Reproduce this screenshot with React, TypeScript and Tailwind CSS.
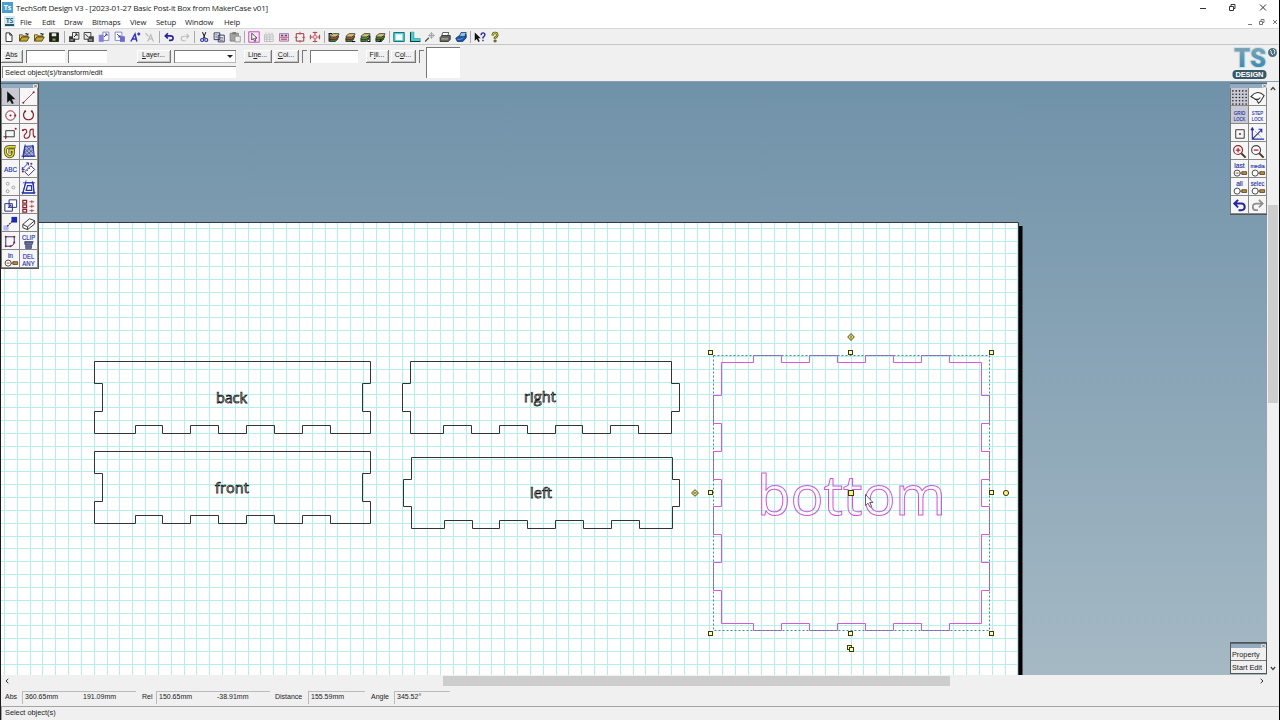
import type React from "react"

const MENUS = [
  { label: "File", width: "w-[22px]" },
  { label: "Edit", width: "w-[22px]" },
  { label: "Draw", width: "w-[28px]" },
  { label: "Bitmaps", width: "w-[38px]" },
  { label: "View", width: "w-[26px]" },
  { label: "Setup", width: "w-[29px]" },
  { label: "Window", width: "w-[39px]" },
  { label: "Help", width: "w-[24px]" },
]

const NAVY = "#29297d"
const BLUE = "#2330a8"
const MAROON = "#8a2430"

const openFolder = (
  <>
    <path d="M2 5h4l1 1.500h6V8H5l-3 5z" fill="#e8cf5a" stroke="#3c3410" strokeWidth="1" />
    <path d="M2 13.500 5 8h10l-3 5.500z" fill="#c9a52c" stroke="#3c3410" strokeWidth="1" />
    <path d="M9 4q2-2.500 4-.5l1-1v3h-3l1-1" fill="#333" />
  </>
)

const pageArrow = (a: string, b: string) => (
  <>
    <path d={a} fill="#eee" stroke="#333" strokeWidth="1.200" />
    <path d={b} fill="none" stroke="#222" strokeWidth="1.300" />
  </>
)

const layers = (top: string, arrow: string) => (
  <>
    <path d="M2.500 14V11L6 8.500h7V11l-3.500 3z" fill="#3f7a35" stroke="#222" strokeWidth="1" />
    <path d="M2.500 11V9L6 6.500h8V8.500L10 11z" fill={top} stroke="#222" strokeWidth="1" />
    <path d="M3 8V6.500L7 3.500h7.500V5L10.500 8z" fill="#cfc56e" stroke="#222" strokeWidth="1" />
    <path d={arrow} stroke="#111" strokeWidth="1.500" fill="none" />
  </>
)

// Every glyph of the main toolbar, grouped as the separators split them.
const TOOLBAR: React.ReactNode[][] = [
  [
    <path d="M4 2.500h5l3 3v8.500H4zM9 2.500v3h3" fill="#fff" stroke="#222" strokeWidth="1.200" />,
    openFolder,
    openFolder,
    <>
      <path d="M2 2.500h12v11.500H2z" fill="#1c2413" stroke="#111" />
      <path d="M5 3h6v4H5z" fill="#e9ecdf" />
      <path d="M6 10h4v3H6z" fill="#8d9466" />
    </>,
  ],
  [
    <>
      {pageArrow("M6 2h8.500v9H6z", "M8 8l4-4M9.500 4H12v2.500")}
      <path d="M1.500 7h5v3h3v4.500h-8z" fill="#333" />
      <path d="M3 12h4" stroke="#fff" />
    </>,
    <>
      {pageArrow("M1.500 2h9v9h-9z", "M3 4l5 5")}
      <path d="M8 7h6.500v7.500H6V10h2z" fill="#444" />
      <path d="M8 12h4" stroke="#fff" />
    </>,
    <>
      <path d="M6.500 1.500h8v11h-8z" fill="#fff" stroke="#6a65b8" />
      <path d="M1 5h6.500v9.500H1z" fill="#8580dc" />
      <path d="M8 8l4-4M9.500 4H12v2.500" stroke="#332f90" fill="none" strokeWidth="1.200" />
    </>,
    <>
      <path d="M1.500 1.500h9v11h-9z" fill="#fff" stroke="#6a65b8" />
      <path d="M8 7h6.500v7.500H8z" fill="#6f6ad0" />
      <path d="M4 4l4 4M8 5.500V8H5.500" stroke="#332f90" fill="none" strokeWidth="1.200" />
    </>,
    <path d="M2.500 14 8 4l2.500 10M5 10.500h5M11 4h4M13 2v4" stroke="#3436b5" strokeWidth="2" fill="none" />,
    <path d="M5 14 9 5l3.500 9M6 10.500h5M2 3l4 4" stroke="#b9b9bd" strokeWidth="1.500" fill="none" />,
  ],
  [
    <path d="M3 6.500h7q3.500 0 3.500 3t-3.500 3H8M6.500 3 3 6.500 6.500 10" stroke="#23269a" strokeWidth="2.100" fill="none" />,
    <path d="M13 7H7q-4 0-4 3t4 3h2M10 4l3 3-3 3" stroke="#bfbfc2" strokeWidth="1.600" fill="none" />,
  ],
  [
    <>
      <path d="M6 1.500l3.500 8.500M10.500 1.500 7 10" stroke="#222" strokeWidth="1.400" />
      <circle cx="5.500" cy="12" r="2" stroke={BLUE} strokeWidth="1.500" fill="none" />
      <circle cx="11" cy="12" r="2" stroke={BLUE} strokeWidth="1.500" fill="none" />
    </>,
    <>
      <path d="M1.500 2.500h7.500v9H1.500zM7 5.500h8v9H7z" fill="#fff" stroke="#26275c" strokeWidth="1.200" />
      <path d="M3 5h3M3 7h3M3 9h3M8.500 8.500h5M8.500 10.500h5M8.500 12.500h5" stroke="#555" />
    </>,
    <>
      <path d="M1.500 3h11v10.500h-11z" fill="#a4a4a0" stroke="#777" />
      <path d="M4.500 1.500h5v3h-5z" fill="#777" />
      <path d="M8 7h7v7.500H8z" fill="#eee" stroke="#888" />
    </>,
  ],
  [
    <>
      <path d="M1 1h14v14H1z" fill="#f6e3f6" stroke="#c83fb4" strokeWidth="1.200" />
      <path d="M5 3v9l2-2 2 4 1.500-1-1.500-3.500h3z" fill="#fff" stroke="#222" />
    </>,
    <path d="M2 5h11.500v9H2zM2 8h11M2 11h11M5 5v9M9 5v9M4 2v2M8 2v2M12 2v2" stroke="#bdbdc1" fill="none" strokeWidth="1.200" />,
    <>
      <path d="M2 3.500h12v10H2z" fill="#e5d2de" stroke="#a15a86" />
      <path d="M3 8.300h10" stroke="#b13448" />
      <path d="M4 5h3v2H4zM9 5h3v2H9z" fill="#464cc0" />
      <path d="M4 10h8v2H4z" fill="#b86c80" />
    </>,
    <>
      <path d="M3 3.500h10v10H3z" stroke="#9c3548" fill="none" strokeWidth="1.300" />
      <path d="M8 1v4M8 12v3.500M1 8.500h4M11 8.500h4" stroke="#b9525f" strokeWidth="1.200" />
    </>,
    <>
      <path d="M8 1v14M1 8h14" stroke="#b2485a" strokeWidth="1.600" />
      <path d="M5 2h6M5 14h6M2 5v6M14 5v6" stroke="#b2485a" strokeWidth="1.500" />
      <path d="M6 6h4v4H6z" fill="#f3d5da" stroke="#c77" />
    </>,
  ],
  [
    layers("#c0573a", "M1.500 14V3.500h4"),
    layers("#c8593c", "M10 14h5"),
    layers("#6d9a3c", "M14.500 6v8H11"),
    layers("#55823a", "M6 14h3v-3"),
  ],
  [
    <>
      <path d="M1 2h14v12H1z" fill="#4fd6da" />
      <path d="M3.500 4.500h9v7.500h-9z" fill="#fff" />
      <path d="M1 2h14v12H1z" stroke="#12636e" fill="none" strokeWidth="1.200" />
    </>,
    <>
      <path d="M2 1.500V14h13v-4H6.500V1.500z" fill="#45cdd0" stroke="#208088" strokeWidth=".7" />
      <path d="M2 1.500V14h13" stroke="#123c44" fill="none" strokeWidth="1.400" />
    </>,
    <>
      <path d="M1.500 14l5-5" stroke="#444" strokeWidth="1.500" />
      <circle cx="10" cy="6" r="2.800" stroke="#999" fill="none" />
      <path d="M10 1.500v9M5.500 6h9" stroke="#999" />
    </>,
    <>
      <path d="M5 2h8l-1.500 5H3.500z" fill="#fff" stroke="#333" />
      <path d="M1.500 8.500 4 6h11v5l-2.500 3h-11z" fill="#68685c" stroke="#222" />
      <path d="M3 10.500h9" stroke="#ddd" />
    </>,
    <>
      <path d="M1 9.500 6 6l9-1.500V9l-4.500 5H3z" fill="#1a55a8" stroke="#12305e" />
      <path d="M6 6.500 8 2h7l-2 5.500H7z" fill="#8cc0e8" stroke="#12305e" />
      <path d="M3 11q4 1.500 8-2" stroke="#7bd" fill="none" />
    </>,
  ],
  [
    <>
      <path d="M1 2v11l2.700-2.500L6 14.500 7.700 13.500 5.500 9.500H9z" fill="#111" />
      <path d="M9.500 5.500Q9.500 2.500 12 2.500T14.500 5q0 1.500-2.500 3.500v1.500M12 11.500v2" stroke="#2a2d9a" strokeWidth="1.900" fill="none" />
    </>,
    <>
      <path d="M5 6q0-3.500 3-3.500t3 3q0 1.500-3 3.500v1.500" stroke="#2d2d10" strokeWidth="3.200" fill="none" />
      <path d="M5 6q0-3.500 3-3.500t3 3q0 1.500-3 3.500v1.500" stroke="#cfcf2c" strokeWidth="1.500" fill="none" />
      <path d="M6.700 12h2.800v2.500H6.700z" fill="#a9a91f" stroke="#2d2d10" strokeWidth=".8" />
    </>,
  ],
]

type WordProps = {
  text: string
  y: number
  length: number
  size?: number
}

function Word({ text, y, length, size = 7 }: WordProps) {
  return (
    <text
      x={9 - length / 2}
      y={y}
      textLength={length}
      lengthAdjust="spacingAndGlyphs"
      fontSize={size}
      fill={BLUE}
      stroke={BLUE}
      strokeWidth=".15"
      fontFamily="Liberation Sans, sans-serif"
    >
      {text}
    </text>
  )
}

const dot = (x: number, y: number) => <circle key={`${x}-${y}`} cx={x} cy={y} r="1.100" fill={MAROON} />

const magnifierHandle = (
  <>
    <circle cx="6.500" cy="12.800" r="3.200" fill="#fff" stroke="#444" />
    <path d="M9.500 12.800h2" stroke="#444" />
    <path d="M11.500 11.300h5v3h-5z" fill="#b8893c" stroke="#4b3a1e" strokeWidth=".8" />
  </>
)

const LEFT_TOOLS: React.ReactNode[] = [
  <path d="M5.500 2.500v12l2.900-2.700 2.100 4.200 1.900-1-2.100-4.100h3.900z" fill="#111" />,
  <>
    <path d="M3.500 14.500 14.500 3.500" stroke="#a04a55" />
    {dot(3.5, 14.5)}
    {dot(14.5, 3.5)}
  </>,
  <>
    <circle cx="9" cy="9" r="5" stroke={MAROON} fill="none" />
    {dot(9, 9)}
    {dot(14, 9)}
  </>,
  <>
    <path d="M5.500 4.500C2 8 4 13.500 9 13.500S16 8 12.500 4.500" stroke={MAROON} fill="none" strokeWidth="1.200" />
    {dot(5.5, 4.5)}
    {dot(12.5, 4.5)}
  </>,
  <>
    <path d="M4 6h9v6.500H4zM1.500 12.500H4M4 12.500V15" stroke="#333" fill="none" />
    {dot(4, 12.5)}
    {dot(14.5, 4)}
  </>,
  <>
    <path d="M3 5.500Q7 3 7.200 7.500L4.500 11Q4 14 7 14t3.500-4V6.500Q11 4 14 4.500v5q0 3 2 3" stroke={MAROON} fill="none" strokeWidth="1.200" />
    {dot(3, 5.5)}
    {dot(15.5, 12.5)}
  </>,
  <>
    <path d="M14.500 4H7.500Q3.500 4 3.500 8.500T7.500 14.500q4.500 0 4.500-5V7.500H8.500V11" stroke="#373710" strokeWidth="3.200" fill="none" />
    <path d="M14.500 4H7.500Q3.500 4 3.500 8.500T7.500 14.500q4.500 0 4.500-5V7.500H8.500V11" stroke="#dcd33a" strokeWidth="1.800" fill="none" />
  </>,
  <>
    <path d="M5 3.500 14 3l1 11H3z" fill="#a5aed0" stroke={BLUE} />
    <path d="M5 6l8 8M7 4l7 7M4 9l5 5M4 11l8-7M5 14l9-7" stroke="#46508c" strokeWidth=".8" />
    <path d="M1.500 14h15M5.500 1.500l-2 15M13.500 2v4" stroke={BLUE} />
  </>,
  <Word text="ABC" y={12} length={14} size={8} />,
  <>
    <path d="M5 11.500l6.500-6.500 4 4L9 15.500z" fill="#fff" stroke={NAVY} />
    <path d="M2 9l7-7M7.500 9.500l1 1M9.500 7.500l1 1M2.500 6.500v2.500H5M9 4.500V2H6.500" stroke={BLUE} fill="none" />
    {dot(3, 11)}
    {dot(12, 3)}
  </>,
  <g stroke="#9a9a9a" fill="#fff">
    <circle cx="6" cy="5" r="1.500" />
    <circle cx="12" cy="9" r="1.500" />
    <circle cx="6" cy="13" r="1.500" />
  </g>,
  <>
    <path d="M6 4h8l1 11H3z M8 7h4l.5 5h-6z" fill="none" stroke={BLUE} strokeWidth="1.200" />
    <path d="M1.500 14.500h15M6.500 1.500l-4 15M13 2l2 14M3 4h13" stroke={BLUE} strokeWidth=".8" />
  </>,
  <>
    <path d="M7.500 3h8v8h-8z" fill="#fff" stroke={NAVY} />
    <path d="M3 7h8v8H3z" fill="none" stroke={NAVY} />
    <path d="M6.500 11.500l3-3M7.500 8.500h2v2" stroke={BLUE} fill="none" />
  </>,
  <>
    <path d="M3 3.500h4v3H3zM3 8.300h4v3H3zM3 13h4v3H3z" stroke={MAROON} fill="none" strokeWidth="1.300" />
    <path d="M10 5h5M10 9.800h5M10 14.500h5M12.500 3.300v3.400M12.500 8.100v3.400M12.500 12.800v3.400" stroke="#b33a44" strokeWidth=".9" />
  </>,
  <>
    <path d="M10 2h6v6h-6z" fill="#1c2ab8" />
    <path d="M1.500 11h5.500v5.500H1.500z" fill="#b4b9f0" />
    <path d="M5.500 12 11 6.500" stroke="#333" strokeWidth="1.300" strokeDasharray="2 1" />
  </>,
  <path d="M3 10 10 4l5.500 2v3.500L8 15.500l-5-2zM3 10l5 2.500L15.500 6M8 12.500v3" fill="#fff" stroke="#333" />,
  <>
    <path d="M4 4h9v6q-1 4-4 4H4z" fill="none" stroke={NAVY} />
    {[dot(4, 4), dot(13, 4), dot(13, 10), dot(9, 14), dot(4, 14)]}
  </>,
  <>
    <Word text="CLIP" y={7.5} length={14} />
    <path d="M5 9h9l-1 3h-.5l-.5 4.500H6V12H5z" fill="#4d5378" stroke="#222c70" strokeWidth=".6" />
    <path d="M6 11h7M6.500 13h6M6.500 15h5" stroke="#9aa0c0" strokeWidth=".6" />
  </>,
  <>
    <Word text="in" y={7.5} length={5.5} />
    {magnifierHandle}
    <path d="M5 12.800h3" stroke="#b33" />
  </>,
  <>
    <Word text="DEL" y={8} length={12} />
    <Word text="ANY" y={15.5} length={13} />
  </>,
]

const RIGHT_TOOLS: React.ReactNode[] = [
  <g fill="#222">
    {[2, 5.5, 9, 12.5, 16].map((x) =>
      [2, 5.5, 9, 12.5, 16].map((y) => <circle key={`${x}-${y}`} cx={x} cy={y} r=".85" />),
    )}
  </g>,
  <path d="M2 8Q9 0 16 7l-4 6.500-2 1.500L8 11.500zM6 11h4l2-2" fill="#fff" stroke="#333" strokeWidth="1.100" />,
  <>
    <Word text="GRID" y={8} length={12} size={6} />
    <Word text="LOCK" y={15} length={12} size={6} />
  </>,
  <>
    <Word text="STEP" y={8} length={12} size={6} />
    <Word text="LOCK" y={15} length={12} size={6} />
  </>,
  <>
    <path d="M5 5h9v9H5z" stroke="#333" fill="none" />
    {dot(9.5, 9.5)}
  </>,
  <>
    <path d="M3.500 3v12H16M3.500 15 13.500 5M2 5.500 3.500 3 5 5.500M10 4.500h3.500V8" stroke={BLUE} fill="none" strokeWidth="1.200" />
    <path d="M7 7l6 6" stroke="#555" strokeDasharray="1 1" />
  </>,
  <>
    <circle cx="7.500" cy="7.500" r="4.700" stroke={MAROON} fill="#fff" strokeWidth="1.200" />
    <path d="M5 7.500h5M7.500 5v5" stroke="#c02030" strokeWidth="1.400" />
    <path d="M11 11 15.500 15.500" stroke="#4b3a1e" strokeWidth="2.200" />
  </>,
  <>
    <circle cx="7.500" cy="7.500" r="4.700" stroke="#444" fill="#fff" strokeWidth="1.200" />
    <path d="M5 7.500h5" stroke="#c02030" strokeWidth="1.400" />
    <path d="M11 11 15.500 15.500" stroke="#4b3a1e" strokeWidth="2.200" />
  </>,
  <>
    <Word text="last" y={7.5} length={11} />
    {magnifierHandle}
    <path d="M5 12.800h3" stroke="#b33" />
  </>,
  <>
    <Word text="media" y={7.5} length={15} size={6.5} />
    {magnifierHandle}
  </>,
  <>
    <Word text="all" y={7.5} length={7} />
    {magnifierHandle}
  </>,
  <>
    <Word text="selec" y={7.5} length={14.5} />
    {magnifierHandle}
  </>,
  <path d="M3.500 7H11q3.500 0 3.500 3.500T11 14H8M7.500 3 3.500 7l4 4" stroke="#2226a0" strokeWidth="2.100" fill="none" />,
  <path d="M14.500 7H8q-4 0-4 3.500T7.500 14h2M10.500 3l4 4-4 4" stroke="#8e8e8e" strokeWidth="1.800" fill="none" />,
]

const BOX_BACK =
  "M94.500 361.500H370.500V383.500H362.500V411.500H370.500V433.500H330.500V425.500H302.500V433.500H274.500V425.500H246.500V433.500H218.500V425.500H190.500V433.500H162.500V425.500H135.500V433.500H94.500V411.500H102.500V383.500H94.500Z"
const BOX_RIGHT =
  "M410.500 361.500H671.500V383.500H679.500V411.500H671.500V433.500H638.500V425.500H610.500V433.500H582.500V425.500H555.500V433.500H527.500V425.500H499.500V433.500H471.500V425.500H443.500V433.500H410.500V411.500H402.500V383.500H410.500Z"
const BOX_LEFT =
  "M411.500 457.500H672.500V479.500H679.500V506.500H672.500V528.500H639.500V520.500H611.500V528.500H583.500V520.500H555.500V528.500H527.500V520.500H499.500V528.500H472.500V520.500H444.500V528.500H411.500V506.500H403.500V479.500H411.500Z"
const BOX_BOTTOM =
  "M721.500 362.500H753.500V355.500H781.500V362.500H809.500V355.500H837.500V362.500H865.500V355.500H893.500V362.500H921.500V355.500H949.500V362.500H981.500V395.500H989.500V423.500H981.500V451.500H989.500V479.500H981.500V506.500H989.500V534.500H981.500V562.500H989.500V590.500H981.500V623.500H949.500V630.500H921.500V623.500H893.500V630.500H865.500V623.500H837.500V630.500H809.500V623.500H781.500V630.500H753.500V623.500H721.500V590.500H713.500V562.500H721.500V534.500H713.500V506.500H721.500V479.500H713.500V451.500H721.500V423.500H713.500V395.500H721.500Z"

const PART_LABELS = [
  { text: "back", x: 216, y: 403, length: 31 },
  { text: "front", x: 215, y: 493, length: 34 },
  { text: "right", x: 524, y: 402, length: 32 },
  { text: "left", x: 530, y: 498, length: 22 },
]

const HANDLES = [
  [711, 352],
  [851, 352],
  [992, 352],
  [711, 492],
  [992, 492],
  [711, 633],
  [851, 633],
  [992, 633],
  [850, 647],
  [852, 649],
]

const GRID_STEP = 12.828

// Grid lines are snapped to whole pixels.
function gridPath(): string {
  const parts: string[] = []
  for (let x = 4.43; x < 1018; x += GRID_STEP) parts.push(`M${Math.floor(x) + 0.5} 223V675`)
  for (let y = 228.2; y < 675; y += GRID_STEP) parts.push(`M1 ${Math.floor(y) + 0.5}H1018`)
  return parts.join("")
}

export default function App() {
  return (
    <div className="flex h-[720px] w-[1280px] flex-col overflow-hidden border-l border-r border-l-[#1a1a1a] border-r-black bg-[#f0f0f0] font-['Liberation_Sans',sans-serif] text-[7px] text-[#222]">
      <TitleBar />
      <MenuBar />
      <Toolbar />
      <PropertyBar />
      <div className="flex h-[593px] shrink-0">
        <Workspace />
        <VerticalScrollbar />
      </div>
      <HorizontalScrollbar />
      <CoordinateBar />
      <div className="flex h-[14px] items-center border-t border-l border-[#a5a5a5] pb-px pl-[3px] text-[7.350px]">
        Select object(s)
      </div>
    </div>
  )
}

function TitleBar() {
  return (
    <div className="flex h-[15px] shrink-0 items-center bg-white pl-px font-['Open_Sans',sans-serif]">
      <AppIcon />
      <span className="ml-[3px] pt-px text-[8px] tracking-[-0.22px] whitespace-nowrap">
        TechSoft Design V3 - [2023-01-27 Basic Post-it Box from MakerCase v01]
      </span>
      <svg className="mr-[10px] ml-auto h-[14px] w-[70px]" viewBox="0 0 70 14" fill="none" stroke="#333">
        <path d="M1 7.500h6M30.500 5.500h4v4h-4zM32 5.500v-2h4v4h-2M61 3.500l6 6M67 3.500l-6 6" />
      </svg>
    </div>
  )
}

function AppIcon() {
  return (
    <svg className="h-[11px] w-[11px]" viewBox="0 0 11 11">
      <rect width="11" height="11" fill="#4d9fcb" />
      <text x="5.500" y="8" textAnchor="middle" fontSize="7" fontWeight="700" fill="#fff">
        Ts
      </text>
    </svg>
  )
}

function MenuBar() {
  return (
    <div className="flex h-[13px] shrink-0 items-center bg-white pl-[3px] font-['Open_Sans',sans-serif] text-[7.700px] tracking-[-0.12px]">
      <svg className="mr-[5px] h-[11px] w-[11px]" viewBox="0 0 11 11">
        <rect width="11" height="11" fill="#d7e8ef" />
        <text x="5.500" y="6.500" textAnchor="middle" fontSize="7" fontWeight="700" fill="#26708e">
          TS
        </text>
        <path d="M1 8h9v2H1z" fill="#2d5767" />
      </svg>
      {MENUS.map((menu) => (
        <span key={menu.label} className={`${menu.width} pt-[2px]`}>
          {menu.label}
        </span>
      ))}
      <svg className="mr-[1px] ml-auto h-3 w-[34px]" viewBox="0 0 34 12" fill="none" stroke="#777">
        <path d="M4 8.500h4M15.500 5.500h3v3h-3zM17 5.500v-2h3v3h-2M29 4l4 4M33 4l-4 4" />
      </svg>
    </div>
  )
}

function Toolbar() {
  return (
    <div className="flex h-[17px] shrink-0 items-center border-t border-b border-t-[#d8d8d8] border-b-[#c6c6c6]">
      {TOOLBAR.map((group, i) => (
        <div key={i} className="flex items-center">
          {i > 0 && <div className="mx-[1.500px] h-3 w-px bg-[#aaa]" />}
          {group.map((glyph, j) => (
            <svg key={j} className="mx-[1.650px] h-3 w-3" viewBox="0 0 16 16" fill="none">
              {glyph}
            </svg>
          ))}
        </div>
      ))}
    </div>
  )
}

function PropertyBar() {
  return (
    <div className="flex h-[37px] shrink-0 border-b border-[#8aa0ae]">
      <div className="flex w-[235px] shrink-0 flex-col">
        <div className="flex h-[21px] items-center pt-px">
          <BarButton width="w-[22px]" accel="A" rest="bs" />
          <Field width="w-[39px]" className="ml-[3px]" />
          <Field width="w-[39px]" className="ml-[3px]" />
          <BarButton width="w-[34px]" accel="L" rest="ayer..." className="ml-[30px]" />
          <div className="ml-[3px] flex h-[13px] w-[62px] shrink-0 items-center justify-end border-t border-l border-[#777] bg-white shadow-[inset_-1px_-1px_#bbb]">
            <svg className="mr-[3px] h-[3px] w-[6px]" viewBox="0 0 6 3">
              <path d="M0 0h6L3 3z" fill="#222" />
            </svg>
          </div>
        </div>
        <div className="ml-px flex h-[12px] items-center border-t border-l border-[#888] bg-white pl-[2px] text-[7.350px]">
          Select object(s)/transform/edit
        </div>
      </div>
      <div className="flex h-[21px] items-center pt-px">
        <BarButton width="w-[28px]" before="Li" accel="n" rest="e..." className="ml-[8px]" />
        <BarButton width="w-[25px]" accel="C" rest="ol..." className="ml-[2px]" />
        <Swatch />
        <Field width="w-[48px]" className="ml-[3px]" />
        <BarButton width="w-[23px]" before="F" accel="i" rest="ll..." className="ml-[8px]" />
        <BarButton width="w-[25px]" before="C" accel="o" rest="l..." className="ml-[2px]" />
        <Swatch />
      </div>
      <div className="mt-[2px] ml-[2px] h-[31px] w-[34px] border-t border-l border-[#777] bg-white" />
      <Brand />
    </div>
  )
}

type BarButtonProps = {
  width: string
  before?: string
  accel: string
  rest: string
  className?: string
}

function BarButton({ width, before, accel, rest, className }: BarButtonProps) {
  return (
    <div
      className={`${width} ${className ?? ""} flex h-[13px] shrink-0 items-center justify-center border-r border-b border-[#777] shadow-[inset_1px_1px_#fff,inset_-1px_-1px_#c4c4c4]`}
    >
      {before}
      <span className="underline">{accel}</span>
      {rest}
    </div>
  )
}

function Field({ width, className }: { width: string; className?: string }) {
  return <div className={`${width} ${className ?? ""} h-[13px] shrink-0 border-t border-l border-[#777] bg-white`} />
}

function Swatch() {
  return <div className="ml-[3px] h-[13px] w-[5px] border-t border-l border-[#777]" />
}

function Brand() {
  return (
    <svg className="ml-auto h-[36px] w-[48px]" viewBox="0 0 48 36">
      <defs>
        <linearGradient id="brand" x1="0" x2="0" y1="0" y2="1">
          <stop offset="0" stopColor="#8aa9b6" />
          <stop offset="1" stopColor="#2a86b0" />
        </linearGradient>
      </defs>
      <text
        x="3"
        y="21.500"
        fontSize="25"
        fontWeight="900"
        fontFamily="Roboto, sans-serif"
        textLength="32"
        lengthAdjust="spacingAndGlyphs"
        fill="url(#brand)"
        stroke="#cfe0e8"
        strokeWidth="2"
        paintOrder="stroke"
      >
        TS
      </text>
      <rect x="1.500" y="25" width="34" height="9" rx="4" fill="#375866" />
      <text x="4.500" y="32.200" fontSize="7.500" fontWeight="700" textLength="28" fill="#fff">
        DESIGN
      </text>
      <circle cx="41.500" cy="7.500" r="4.500" fill="#506d7b" />
      <path d="M39 5q2 1 1 3l2 2M42 4l2 2-1 3" stroke="#dce8ee" fill="none" />
    </svg>
  )
}

function Workspace() {
  return (
    <div className="relative h-full w-[1266px] overflow-hidden bg-linear-to-b from-[#7092a9] to-[#a5b9c4]">
      <Drawing />
      <Palette tools={LEFT_TOOLS} pressed={[0]} className="left-0" />
      <Palette tools={RIGHT_TOOLS} pressed={[0, 2]} className="left-[1229px]" />
      <div className="absolute top-[560px] left-[1229px] w-[37px] border border-[#555] bg-[#f0f0f0] text-[7.300px]">
        <PaletteTitle />
        <div className="flex h-[13px] items-center border-b border-[#777] pt-[2px] pl-[1px]">Property</div>
        <div className="flex h-[12px] items-center pt-[2px] pl-[1px] whitespace-nowrap">Start Edit</div>
      </div>
    </div>
  )
}

function Drawing() {
  return (
    <svg className="absolute top-0 left-0 h-[593px] w-[1266px]" viewBox="1 82 1266 593" fill="none">
      <rect x="1018" y="226" width="4.500" height="449" fill="#000" />
      <rect x="0" y="222" width="1018.500" height="454" fill="#fff" />
      <path d={gridPath()} stroke="#b6efe9" />
      <path d="M1 222.500H1018.500V675" stroke="#2e3a40" />

      <g stroke="#333">
        <path d={BOX_BACK} />
        <path d={BOX_BACK} transform="translate(0 90)" />
        <path d={BOX_RIGHT} />
        <path d={BOX_LEFT} />
      </g>
      <g fontFamily="Open Sans, sans-serif" fontSize="14.500" fill="#fff" stroke="#111" strokeWidth=".75">
        {PART_LABELS.map((label) => (
          <text key={label.text} x={label.x} y={label.y} textLength={label.length}>
            {label.text}
          </text>
        ))}
      </g>

      <path d={BOX_BOTTOM} stroke="#d858d8" />
      <text
        x="757"
        y="514.500"
        fontFamily="Open Sans, sans-serif"
        fontSize="54.500"
        textLength="189"
        lengthAdjust="spacingAndGlyphs"
        stroke="#d455d6"
        strokeWidth="1"
      >
        bottom
      </text>
      <path d="M713.500 355.500h276v275h-276z" stroke="#3f8e92" strokeDasharray="2 2" />

      <g fill="#fdfbb0" stroke="#3b3b12">
        {HANDLES.map(([x, y]) => (
          <rect key={`${x}-${y}`} x={x - 2.5} y={y - 1.5} width="4" height="4" />
        ))}
        <rect x="848.500" y="490.500" width="5" height="5" fill="#ffee8c" />
        <g fill="#e6e27a" strokeWidth=".9">
          <path d="M851 333.500l3.300 3.500-3.300 3.500-3.300-3.500z" />
          <path d="M851 335.500v3" />
          <path d="M695 489.700l3.500 3.300-3.500 3.300-3.500-3.300z" />
          <path d="M693.500 493h3" />
        </g>
        <circle cx="1006" cy="493" r="2.600" fill="#f6f08a" />
      </g>
      <path d="M865.500 494.500v11l2.500-2.300 2 4 1.600-.8-1.900-3.900h3.300z" fill="#fff" stroke="#4a3354" strokeWidth=".8" />
    </svg>
  )
}

type PaletteProps = {
  tools: React.ReactNode[]
  pressed: number[]
  className: string
}

function Palette({ tools, pressed, className }: PaletteProps) {
  return (
    <div className={`${className} absolute top-px w-[38px] border-r border-b border-[#555] bg-[#f0f0f0]`}>
      <PaletteTitle />
      <div className="grid grid-cols-2 border-l border-[#777]">
        {tools.map((tool, i) => (
          <div
            key={i}
            className={`h-[18px] w-[18px] border-r border-b border-[#888] ${pressed.includes(i) ? "bg-[#c9c9d4]" : "bg-[#f6f6f6]"}`}
          >
            <svg className="mt-px h-[17px] w-[17px]" viewBox="0 0 18 18" fill="none">
              {tool}
            </svg>
          </div>
        ))}
      </div>
    </div>
  )
}

function PaletteTitle() {
  return (
    <div className="flex h-[5px] justify-end border-t border-[#5a6b78] bg-[#93abc0]">
      <svg className="h-[4px] w-[5px] bg-[#e6e6e6]" viewBox="0 0 5 4">
        <path d="M1 .5l3 3M4 .5l-3 3" stroke="#555" strokeWidth=".7" />
      </svg>
    </div>
  )
}

function VerticalScrollbar() {
  return (
    <div className="flex w-[12px] flex-col items-center bg-[#f0f0f0] py-[4px]">
      <svg className="h-[5px] w-[6px]" viewBox="0 0 6 5" fill="none">
        <path d="M.8 4 3 1.500 5.200 4" stroke="#444" strokeWidth="1.200" />
      </svg>
      <div className="mt-[114px] h-[198px] w-[10px] bg-[#cdcdcd]" />
      <svg className="mt-auto h-[5px] w-[6px]" viewBox="0 0 6 5" fill="none">
        <path d="M.8 1 3 3.500 5.200 1" stroke="#444" strokeWidth="1.200" />
      </svg>
    </div>
  )
}

function HorizontalScrollbar() {
  return (
    <div className="flex h-[12px] shrink-0 items-center pr-[15px] pl-[4px]">
      <svg className="h-[6px] w-[4px]" viewBox="0 0 4 6" fill="none">
        <path d="M3.300 .8 1 3l2.300 2.200" stroke="#333" />
      </svg>
      <div className="ml-[434px] h-[10px] w-[507px] bg-[#cdcdcd]" />
      <svg className="ml-auto h-[6px] w-[4px]" viewBox="0 0 4 6" fill="none">
        <path d="M.7 .8 3 3 .7 5.200" stroke="#333" />
      </svg>
    </div>
  )
}

function CoordinateBar() {
  return (
    <div className="flex h-[19px] shrink-0 items-center pt-px pl-[4px]">
      <span className="w-[17px]">Abs</span>
      <Readout width="w-[114px]" values={["360.65mm", "191.09mm"]} />
      <span className="ml-[6px] w-[14px]">Rel</span>
      <Readout width="w-[114px]" values={["150.65mm", "-38.91mm"]} />
      <span className="ml-[5px] w-[33px]">Distance</span>
      <Readout width="w-[57px]" values={["155.59mm"]} />
      <span className="ml-[6px] w-[23px]">Angle</span>
      <Readout width="w-[56px]" values={["345.52°"]} />
    </div>
  )
}

function Readout({ width, values }: { width: string; values: string[] }) {
  return (
    <div className={`${width} flex h-[13px] items-center border-t border-l border-[#bbb] pl-[2px]`}>
      {values.map((value) => (
        <span key={value} className="w-[58px] shrink-0">
          {value}
        </span>
      ))}
    </div>
  )
}
